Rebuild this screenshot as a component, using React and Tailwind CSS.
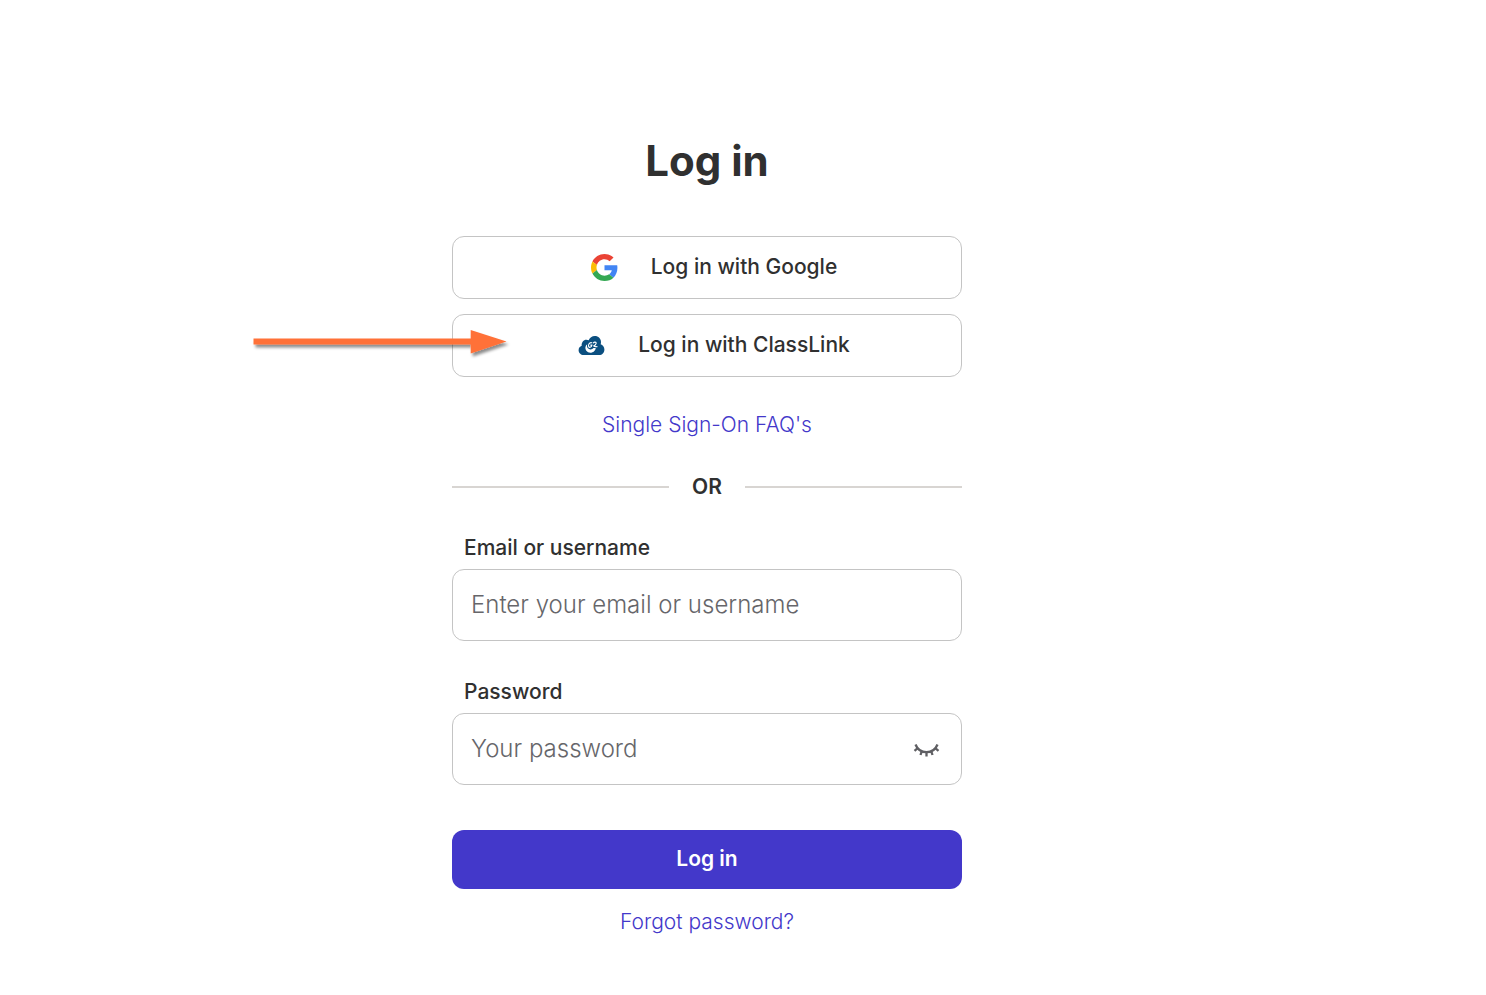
import { useState } from "react";

function GoogleIcon() {
  return (
    <svg className="size-[27px] shrink-0" viewBox="0 0 48 48" aria-hidden="true">
      <path fill="#EA4335" d="M24 9.5c3.54 0 6.71 1.22 9.21 3.6l6.85-6.85C35.9 2.38 30.47 0 24 0 14.62 0 6.51 5.38 2.56 13.22l7.98 6.19C12.43 13.72 17.74 9.5 24 9.5z" />
      <path fill="#4285F4" d="M46.98 24.55c0-1.57-.15-3.09-.38-4.55H24v9.02h12.94c-.58 2.96-2.26 5.48-4.78 7.18l7.73 6c4.51-4.18 7.09-10.36 7.09-17.65z" />
      <path fill="#FBBC05" d="M10.53 28.59c-.48-1.45-.76-2.99-.76-4.59s.27-3.14.76-4.59l-7.98-6.19C.92 16.46 0 20.12 0 24c0 3.88.92 7.54 2.56 10.78l7.97-6.19z" />
      <path fill="#34A853" d="M24 48c6.48 0 11.93-2.13 15.89-5.81l-7.73-6c-2.15 1.45-4.92 2.3-8.16 2.3-6.26 0-11.57-4.22-13.47-9.91l-7.98 6.19C6.51 42.62 14.62 48 24 48z" />
    </svg>
  );
}

function ClassLinkIcon() {
  return (
    <svg className="size-[27px] shrink-0" viewBox="0 0 27 27" aria-hidden="true">
      <path
        fill="#0b4f80"
        d="M5.600 23C2.800 23 .6 20.800.6 18.200c0-2.200 1.400-3.800 3.100-4.400C3.300 10.500 5.500 7.800 8.400 7.800c.8 0 1.600.2 2.300.5C11.700 6 14 4.100 16.800 4.100c3.600 0 6.200 2.700 6.200 6.100 0 .8-.2 1.500-.4 2.100 2.200.8 3.800 2.700 3.800 5.100 0 3.100-2.300 5.600-5.300 5.600z"
      />
      <path
        fill="#fff"
        d="M9.200 12.300C7.200 13.700 6.700 16.700 8.300 18.800c1.900 2.400 5.600 2.500 7.800.4 1-.9 1.500-2 1.600-3.200l-2.200.1c-.9 1.100-2.100 1.500-3.300 1.300-1.600-.2-2.600-1-3-2.300-.3-.9-.3-1.900 0-2.800z"
      />
      <path
        d="M13.700 10.800c-1.300-.5-2.500.5-3 1.800-.6 1.600.1 2.900 1.400 2.700 1.100-.2 1.600-1.100 1.800-2.200h-1.200M15.300 10.800c1-1 3-.9 2.900.5-.1 1.300-1.500 2.300-2.900 2.700 1.400 0 2 1.100 3.700.6"
        fill="none"
        stroke="#fff"
        strokeWidth="1.100"
        strokeLinecap="round"
      />
    </svg>
  );
}

function ClosedEyeIcon() {
  return (
    <svg className="h-5 w-7" viewBox="0 0 28 20" fill="none" stroke="#5f5f63" strokeWidth="2.300" aria-hidden="true">
      <path d="M2.500 4.500C4.500 9.500 8.500 12.200 13.500 12.200S22.500 9.500 24.500 4.500" />
      <path d="M4.700 8.200 1.500 10.800M22.300 8.200 25.500 10.800M8.800 11.200 7.500 15M18.200 11.200 19.500 15M13.500 12v4.500" />
    </svg>
  );
}

function PointerArrow() {
  return (
    <svg
      className="pointer-events-none absolute -left-[200px] top-2 h-10 w-[264px]"
      viewBox="0 0 264 40"
      aria-hidden="true"
    >
      <defs>
        <filter id="arrow-shadow" x="-5%" y="-30%" width="110%" height="180%">
          <feDropShadow dx="2" dy="3" stdDeviation="1.500" floodColor="#000" floodOpacity="0.45" />
        </filter>
      </defs>
      <path fill="#ff7139" filter="url(#arrow-shadow)" d="M1.500 16.500H218.700V8L254.500 19.500 218.700 31.500V22.500H1.500z" />
    </svg>
  );
}

function ProviderButton({ icon, children }) {
  return (
    <button
      type="button"
      className="flex h-[63px] w-full items-center justify-center gap-[33px] rounded-xl border border-[#c4c4c4] bg-white pl-[14px] text-[21px] leading-[30px] font-medium"
    >
      {icon}
      <span className="pb-[2px]">{children}</span>
    </button>
  );
}

const inputClass =
  "h-[72px] w-full rounded-xl border border-[#c4c4c4] bg-white pb-[2px] pl-[18px] text-2xl font-light text-[#303030] placeholder:text-[#66666a] placeholder:opacity-100";

export default function App() {
  const [visible, setVisible] = useState(false);

  return (
    <main className="flex min-h-screen justify-center bg-white px-4 pt-[136px] pb-10 font-['Inter',sans-serif] text-[21px] leading-[30px] text-[#303030] lg:pr-[88px]">
      <form className="flex w-full max-w-[510px] flex-col" onSubmit={(e) => e.preventDefault()}>
        <h1 className="mb-[50px] text-center text-[42px] leading-[50px] font-bold">Log in</h1>

        <div className="flex flex-col gap-[15px]">
          <ProviderButton icon={<GoogleIcon />}>Log in with Google</ProviderButton>
          <div className="relative">
            <ProviderButton icon={<ClassLinkIcon />}>Log in with ClassLink</ProviderButton>
            <PointerArrow />
          </div>
        </div>

        <a href="#faq" className="mt-[33px] self-center font-light text-[#4338ca]">
          Single Sign-On FAQ's
        </a>

        <div className="mt-8 flex items-center gap-[23px] font-semibold">
          <span className="h-[2px] flex-1 bg-[#d8d5d2]" />
          <span>OR</span>
          <span className="h-[2px] flex-1 bg-[#d8d5d2]" />
        </div>

        <div className="mt-[31px] flex flex-col gap-[6px]">
          <label htmlFor="email" className="pl-3 font-medium">
            Email or username
          </label>
          <input id="email" type="text" placeholder="Enter your email or username" className={`${inputClass} pr-[18px]`} />
        </div>

        <div className="mt-9 flex flex-col gap-[6px]">
          <label htmlFor="password" className="pl-3 font-medium">
            Password
          </label>
          <div className="relative">
            <input
              id="password"
              type={visible ? "text" : "password"}
              placeholder="Your password"
              className={`${inputClass} pr-16`}
            />
            <button
              type="button"
              aria-label="Show password"
              className="absolute inset-y-0 right-[21px] flex items-center pt-[2px]"
              onClick={() => setVisible(!visible)}
            >
              <ClosedEyeIcon />
            </button>
          </div>
        </div>

        <button type="submit" className="mt-[45px] h-[59px] w-full rounded-xl bg-[#4338ca] pb-[2px] font-semibold text-white">
          Log in
        </button>

        <a href="#forgot" className="mt-[18px] self-center font-light text-[#4338ca]">
          Forgot password?
        </a>
      </form>
    </main>
  );
}
